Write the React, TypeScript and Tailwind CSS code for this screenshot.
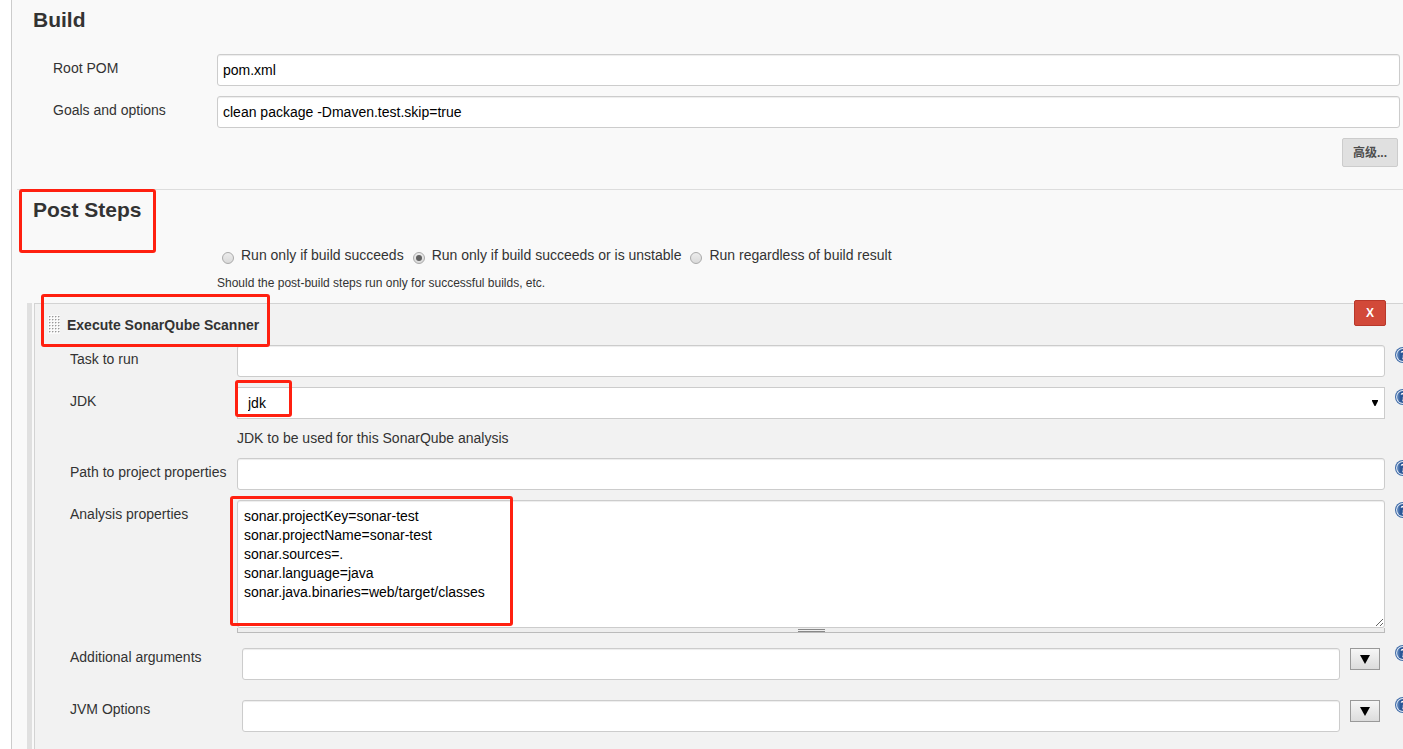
import { useId, useState, type ReactNode } from 'react';

const inputClass =
  'block h-8 w-full min-w-0 rounded-[3px] border border-[#ccc] bg-white px-[5px] text-sm text-black shadow-[inset_0_1px_1px_rgba(0,0,0,0.075)] outline-none focus:border-sky-500';

const stepOptions = [
  'Run only if build succeeds',
  'Run only if build succeeds or is unstable',
  'Run regardless of build result',
];

const initialProperties = [
  'sonar.projectKey=sonar-test',
  'sonar.projectName=sonar-test',
  'sonar.sources=.',
  'sonar.language=java',
  'sonar.java.binaries=web/target/classes',
].join('\n');

function Highlight({ className }: { className: string }) {
  return (
    <span
      aria-hidden="true"
      className={`pointer-events-none absolute z-10 rounded-[3px] border-3 border-[#ff2010] ${className}`}
    />
  );
}

function HelpIcon() {
  return (
    <svg className="block size-4 shrink-0" viewBox="0 0 16 16" aria-hidden="true">
      <defs>
        <linearGradient id="help-fill" x1="0" y1="0" x2="1" y2="0">
          <stop offset="0" stopColor="#6c93c6" />
          <stop offset="0.3" stopColor="#2b5797" />
          <stop offset="1" stopColor="#2b5797" />
        </linearGradient>
      </defs>
      <circle cx="8" cy="8" r="8" fill="#3f6ba8" />
      <circle cx="8" cy="8" r="6.9" fill="#e6edf6" />
      <circle cx="8" cy="8" r="6" fill="url(#help-fill)" />
      <path
        d="M6.3 5.6C6.6 4 10.600 3.900 10.500 6.300C10.400 7.700 8.300 7.700 8.300 9.500"
        fill="none"
        stroke="#fff"
        strokeWidth="1.500"
      />
      <rect x="7.400" y="10.500" width="1.800" height="1.800" fill="#fff" />
    </svg>
  );
}

function DragHandle() {
  return (
    <svg className="h-[19px] w-3 shrink-0" viewBox="0 0 12 19" aria-hidden="true">
      <defs>
        <pattern id="grip-dots" width="3" height="3" patternUnits="userSpaceOnUse">
          <rect width="3" height="3" fill="#fafafa" />
          <rect x="1" y="1" width="1" height="1" fill="#999" />
          <rect x="2" y="1" width="1" height="1" fill="#d0d0d0" />
          <rect x="1" y="2" width="1" height="1" fill="#d8d8d8" />
        </pattern>
      </defs>
      <rect width="12" height="19" fill="url(#grip-dots)" />
    </svg>
  );
}

function BuildRow({ label, value }: { label: string; value: string }) {
  const id = useId();
  return (
    <div className="grid grid-cols-[164px_1fr] pb-2.5">
      <label htmlFor={id} className="pt-1 leading-5">
        {label}
      </label>
      <input id={id} type="text" defaultValue={value} className={inputClass} />
    </div>
  );
}

function StepRow({ label, children }: { label: string; children: (id: string) => ReactNode }) {
  const id = useId();
  return (
    <div className="grid grid-cols-[167px_1fr_18px] pb-2.5">
      <label htmlFor={id} className="pt-1 leading-5">
        {label}
      </label>
      <div className="min-w-0">{children(id)}</div>
      <button type="button" aria-label={`Help for ${label}`} className="mt-0.5 ml-2.5 h-4 w-4">
        <HelpIcon />
      </button>
    </div>
  );
}

function ExpandableInput({ id }: { id: string }) {
  return (
    <div className="flex items-start gap-2.5 p-[5px]">
      <input id={id} type="text" className={inputClass} />
      <button
        type="button"
        aria-label="Expand"
        className="flex h-[22px] w-[30px] shrink-0 items-center justify-center border border-[#999] bg-linear-to-b from-[#f6f6f6] to-[#dcdcdc]"
      >
        <svg className="h-[9px] w-2.5" viewBox="0 0 10 9" aria-hidden="true">
          <path d="M0 0H10L5 9Z" fill="#000" />
        </svg>
      </button>
    </div>
  );
}

export default function App() {
  const [selected, setSelected] = useState(1);

  return (
    <div className="flex min-h-screen flex-col overflow-x-clip bg-white pl-[11px] font-['Liberation_Sans',Arial,'Noto_Sans_CJK_SC',sans-serif] text-sm text-[#333]">
      <main className="flex flex-1 flex-col border-l border-[#ccc] bg-[#f9f9f9] pl-[5px]">
        <section className="pt-2 pb-[22px]">
          <h2 className="mb-[22px] pl-4 text-[21px] leading-6 font-bold">Build</h2>
          <div className="pr-[3px] pl-9">
            <BuildRow label="Root POM" value="pom.xml" />
            <BuildRow label="Goals and options" value="clean package -Dmaven.test.skip=true" />
          </div>
          <div className="flex justify-end pr-[5px]">
            <button
              type="button"
              className="h-[29px] rounded-[2px] border border-[#ccc] bg-[#e0e0e0] px-2.5 text-xs font-bold text-[#4d4d4d]"
            >
              高级...
            </button>
          </div>
        </section>

        <section className="relative flex flex-1 flex-col border-t border-[#ddd] pt-2">
          <Highlight className="-top-px left-0.5 h-16 w-[137px]" />
          <h2 className="mb-[22px] pl-4 text-[21px] leading-6 font-bold">Post Steps</h2>
          <div className="pl-[200px]">
            <div role="radiogroup" aria-label="Post Steps" className="flex gap-1 leading-[22px]">
              {stepOptions.map((option, index) => (
                <label key={option} className="flex items-center whitespace-nowrap">
                  <input
                    type="radio"
                    name="post-step-condition"
                    checked={selected === index}
                    onChange={() => setSelected(index)}
                    className="mt-1.5 mr-[7px] ml-[5px] grid size-3 shrink-0 appearance-none place-items-center rounded-full border border-[#aaa] bg-linear-to-b from-[#ececec] to-[#dadada] before:size-1.5 before:rounded-full checked:before:bg-[#606060]"
                  />
                  {option}
                </label>
              ))}
            </div>
            <p className="mt-[9px] text-xs leading-4">
              Should the post-build steps run only for successful builds, etc.
            </p>
          </div>

          <div className="mt-3 ml-2.5 flex flex-1 border-l-5 border-[#e0e0e0] pl-0.5">
            <div className="relative flex-1 border-t border-l border-[#d3d3d3] bg-[#f2f2f2]">
              <button
                type="button"
                aria-label="Delete step"
                className="absolute -top-1 right-[17px] h-[26px] w-8 rounded-[2px] border border-[#b8382b] bg-[#d24939] text-xs font-bold text-white"
              >
                X
              </button>
              <Highlight className="-top-2.5 left-1.5 h-[53px] w-[229px]" />
              <div className="flex h-[41px] items-center gap-[7px] pl-[13px]">
                <DragHandle />
                <h3 className="font-bold">Execute SonarQube Scanner</h3>
              </div>

              <div className="pl-[35px]">
                <StepRow label="Task to run">
                  {(id) => <input id={id} type="text" className={inputClass} />}
                </StepRow>
                <StepRow label="JDK">
                  {(id) => (
                    <>
                      <div className="relative">
                        <Highlight className="-top-[7px] -left-0.5 h-[37px] w-[57px]" />
                        <select
                          id={id}
                          defaultValue="jdk"
                          className="block h-8 w-full appearance-none border border-[#ccc] bg-white pr-6 pl-2.5 text-sm text-black outline-none"
                        >
                          <option value="jdk">jdk</option>
                        </select>
                        <svg
                          className="pointer-events-none absolute top-[13px] right-[7px] h-1.5 w-1.5"
                          viewBox="0 0 6 6"
                          aria-hidden="true"
                        >
                          <path d="M0 0H6V1L3.500 6H2.500L0 1Z" fill="#000" />
                        </svg>
                      </div>
                      <p className="mt-[9px] leading-5">JDK to be used for this SonarQube analysis</p>
                    </>
                  )}
                </StepRow>
                <StepRow label="Path to project properties">
                  {(id) => <input id={id} type="text" className={inputClass} />}
                </StepRow>
                <StepRow label="Analysis properties">
                  {(id) => (
                    <div className="relative">
                      <Highlight className="-top-1 -left-[7px] h-[130px] w-[283px]" />
                      <textarea
                        id={id}
                        defaultValue={initialProperties}
                        className="block h-32 w-full resize rounded-[3px] border border-[#ccc] bg-white p-1.5 text-sm leading-[19px] text-black shadow-[inset_0_1px_1px_rgba(0,0,0,0.075)] outline-none"
                      />
                      <div className="flex h-[5px] justify-center border-x border-b border-[#bbb] bg-[#eee] pt-px">
                        <span className="h-[3px] w-[27px] border-y border-[#888]" />
                      </div>
                    </div>
                  )}
                </StepRow>
                <StepRow label="Additional arguments">{(id) => <ExpandableInput id={id} />}</StepRow>
                <StepRow label="JVM Options">{(id) => <ExpandableInput id={id} />}</StepRow>
              </div>
            </div>
          </div>
        </section>
      </main>
    </div>
  );
}
